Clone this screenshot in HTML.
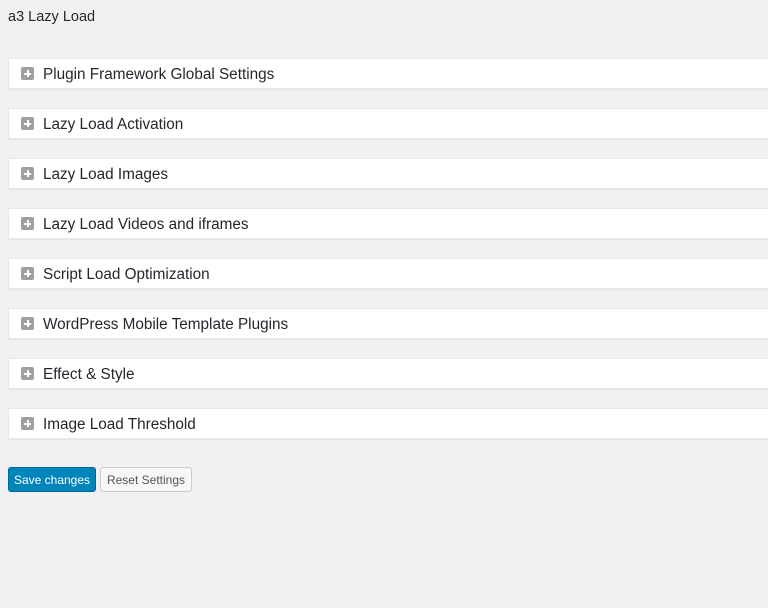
<!DOCTYPE html>
<html><head><style>
body{margin:0;background:#f1f1f1;width:768px;height:608px;overflow:hidden;font-family:"Liberation Sans",sans-serif;color:#23282d}
h1{position:absolute;left:8px;top:9px;margin:0;font-size:14.5px;font-weight:normal}
.p{position:absolute;left:8px;width:770px;height:31px;background:#fff;box-shadow:0 1px 1px rgba(0,0,0,.06);border:1px solid #e8e8e8;box-sizing:border-box}
.p i{position:absolute;left:12px;top:8px;width:13px;height:13px;background:#a0a0a0;border-radius:2px}
.p i:before{content:"";position:absolute;left:5.5px;top:3px;width:2px;height:7px;background:#fff}
.p i:after{content:"";position:absolute;left:3px;top:5.5px;width:7px;height:2px;background:#fff}
.p span{position:absolute;left:34px;top:7px;font-size:15.3px;white-space:nowrap}
.b{position:absolute;top:467px;height:25px;box-sizing:border-box;border-radius:3px;font-size:12px;line-height:24px;text-align:center}
</style></head><body>
<h1>a3 Lazy Load</h1>
<div class="p" style="top:58px"><i></i><span>Plugin Framework Global Settings</span></div>
<div class="p" style="top:108px"><i></i><span>Lazy Load Activation</span></div>
<div class="p" style="top:158px"><i></i><span>Lazy Load Images</span></div>
<div class="p" style="top:208px"><i></i><span>Lazy Load Videos and iframes</span></div>
<div class="p" style="top:258px"><i></i><span>Script Load Optimization</span></div>
<div class="p" style="top:308px"><i></i><span>WordPress Mobile Template Plugins</span></div>
<div class="p" style="top:358px"><i></i><span>Effect &amp; Style</span></div>
<div class="p" style="top:408px"><i></i><span>Image Load Threshold</span></div>
<div class="b" style="left:8px;width:88px;background:#0085ba;border:1px solid #006799;color:#fff">Save changes</div>
<div class="b" style="left:100px;width:92px;background:#f7f7f7;border:1px solid #ccc;color:#555">Reset Settings</div>
</body></html>
